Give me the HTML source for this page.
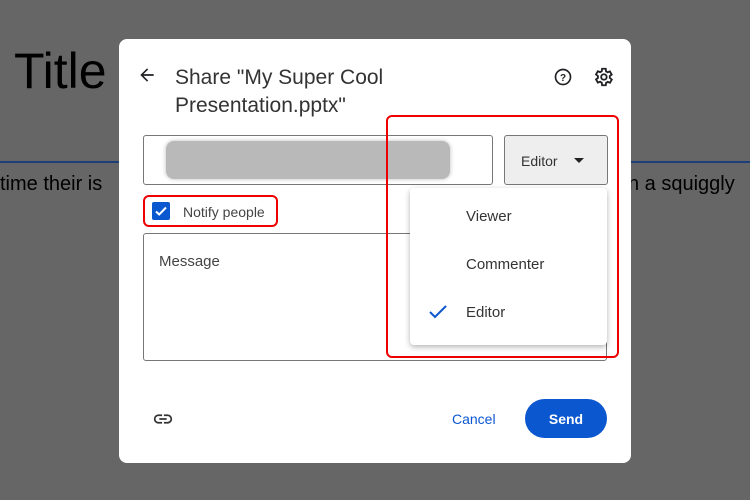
<!DOCTYPE html>
<html><head><style>
body{margin:0;width:750px;height:500px;background:#666;position:relative;overflow:hidden;font-family:"Liberation Sans",sans-serif}
.a{position:absolute}
</style></head><body>
<div class="a" style="left:14px;top:42px;font-size:50px;color:#000">Title</div>
<div class="a" style="left:0;top:161px;width:750px;height:2px;background:#1c3f7a"></div>
<div class="a" style="left:0;top:173px;font-size:20px;color:#000">time their is</div>
<div class="a" style="left:628px;top:173px;font-size:20px;color:#000">n a squiggly</div>
<div class="a" style="left:119px;top:39px;width:512px;height:424px;background:#fff;border-radius:8px"></div>
<svg class="a" style="left:137px;top:65px" width="20" height="20" viewBox="0 0 24 24"><path d="M20 11H7.8l5.6-5.6L12 4l-8 8 8 8 1.4-1.4L7.8 13H20z" fill="#202124"/></svg>
<div class="a" style="left:175px;top:64px;font-size:21px;line-height:28px;color:#333">Share "My Super Cool<br>Presentation.pptx"</div>
<svg class="a" style="left:553px;top:67px" width="20" height="20" viewBox="0 0 24 24"><circle cx="12" cy="12" r="9" fill="none" stroke="#202124" stroke-width="2"/><text x="12" y="16.5" font-size="12" font-weight="bold" text-anchor="middle" fill="#202124" font-family="Liberation Sans">?</text></svg>
<svg class="a" style="left:592px;top:66px" width="22" height="22" viewBox="0 0 24 24"><path d="M19.4 13a7.5 7.5 0 0 0 0-2l2.1-1.6-2-3.5-2.5 1a7 7 0 0 0-1.7-1L15 3h-4l-.4 2.7a7 7 0 0 0-1.7 1l-2.5-1-2 3.5L6.5 11a7.5 7.5 0 0 0 0 2l-2.1 1.6 2 3.5 2.5-1a7 7 0 0 0 1.7 1L11 21h4l.4-2.7a7 7 0 0 0 1.7-1l2.5 1 2-3.5z" fill="none" stroke="#202124" stroke-width="2"/><circle cx="13" cy="12" r="3" fill="none" stroke="#202124" stroke-width="2"/></svg>
<div class="a" style="left:143px;top:135px;width:348px;height:48px;border:1px solid #777;border-radius:3px"></div>
<div class="a" style="left:166px;top:141px;width:284px;height:38px;background:#b9b9b9;border-radius:8px;box-shadow:0 0 4px #bbb"></div>
<div class="a" style="left:504px;top:135px;width:102px;height:48px;border:1px solid #777;border-radius:3px;background:#eee;font-size:14px;color:#333;line-height:48px"><span style="position:absolute;left:16px;top:1px">Editor</span><span style="position:absolute;left:69px;top:22px;border-left:5px solid transparent;border-right:5px solid transparent;border-top:5px solid #222"></span></div>
<div class="a" style="left:143px;top:233px;width:462px;height:126px;border:1px solid #777;border-radius:3px"></div>
<div class="a" style="left:159px;top:253px;font-size:15px;color:#444">Message</div>
<div class="a" style="left:152px;top:202px;width:18px;height:18px;background:#0b57d0;border-radius:2px"></div>
<svg class="a" style="left:152px;top:202px" width="18" height="18" viewBox="0 0 18 18"><path d="M4 9.5l3.2 3L14 5.5" fill="none" stroke="#fff" stroke-width="2"/></svg>
<div class="a" style="left:183px;top:204px;font-size:14px;color:#444">Notify people</div>
<div class="a" style="left:143px;top:195px;border:2px solid #e00;border-radius:6px;box-sizing:border-box;width:135px;height:32px"></div>
<div class="a" style="left:410px;top:188px;width:197px;height:157px;background:#fff;border-radius:4px;box-shadow:0 2px 6px rgba(0,0,0,.3)"></div>
<div class="a" style="left:466px;top:208px;font-size:15px;color:#333">Viewer</div>
<div class="a" style="left:466px;top:256px;font-size:15px;color:#333">Commenter</div>
<div class="a" style="left:466px;top:304px;font-size:15px;color:#333">Editor</div>
<svg class="a" style="left:428px;top:304px" width="20" height="16" viewBox="0 0 20 16"><path d="M2 8l5 5L18 2" fill="none" stroke="#0b57d0" stroke-width="2"/></svg>
<div class="a" style="left:386px;top:115px;width:233px;height:243px;border:2px solid #e00;border-radius:6px;box-sizing:border-box"></div>
<svg class="a" style="left:152px;top:408px" width="22" height="22" viewBox="0 0 24 24"><path d="M3.9 12c0-1.7 1.4-3.1 3.1-3.1h4V7H7a5 5 0 0 0 0 10h4v-1.9H7c-1.7 0-3.1-1.4-3.1-3.1zM8 13h8v-2H8zm9-6h-4v1.9h4c1.7 0 3.1 1.4 3.1 3.1s-1.4 3.1-3.1 3.1h-4V17h4a5 5 0 0 0 0-10z" fill="#333"/></svg>
<div class="a" style="left:452px;top:411px;font-size:14px;color:#0b57d0">Cancel</div>
<div class="a" style="left:525px;top:399px;width:82px;height:39px;background:#0b57d0;border-radius:20px;color:#fff;font-size:14px;font-weight:bold;text-align:center;line-height:40px">Send</div>
</body></html>
